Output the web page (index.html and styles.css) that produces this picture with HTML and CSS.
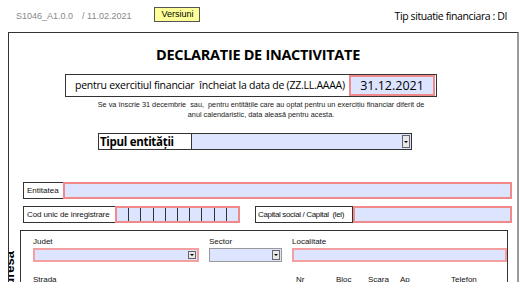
FILE: index.html
```html
<!DOCTYPE html>
<html>
<head>
<meta charset="utf-8">
<link rel="stylesheet" href="styles.css">
</head>
<body>
<div class="top">
  <span class="code">S1046_A1.0.0</span>
  <span class="date">/ 11.02.2021</span>
  <span class="versiuni">Versiuni</span>
  <span class="tip">Tip situatie financiara : DI</span>
</div>
<div class="main">
  <h1 class="title">DECLARATIE DE INACTIVITATE</h1>
  <div class="period">
    <span class="period-label">pentru exercitiul financiar &nbsp;încheiat la data de (ZZ.LL.AAAA)</span>
    <span class="period-val">31.12.2021</span>
  </div>
  <p class="note">Se va înscrie 31 decembrie &nbsp;sau, &nbsp;pentru entitățile care au optat pentru un exercițiu financiar diferit de<br>anul calendaristic, data aleasă pentru acesta.</p>
  <div class="tipul">
    <span class="tipul-label">Tipul entității</span>
    <span class="sel"><span class="arrow"></span></span>
  </div>
  <div class="row ent">
    <span class="lbl">Entitatea</span>
    <span class="inp grow"></span>
  </div>
  <div class="row cui-row">
    <span class="lbl">Cod unic de inregistrare</span>
    <span class="cells">
      <i></i><i></i><i></i><i></i><i></i><i></i><i></i><i></i><i></i><i></i>
    </span>
    <span class="lbl cap">Capital social / Capital &nbsp;(lei)</span>
    <span class="inp grow"></span>
  </div>
  <div class="adresa">
    <div class="vert"><span>Adresa</span></div>
    <div class="addr-box">
      <div class="addr-row">
        <div class="field judet"><span class="flbl">Judet</span><span class="dd pink"><span class="arrow"></span></span></div>
        <div class="field sector"><span class="flbl">Sector</span><span class="dd"><span class="arrow"></span></span></div>
        <div class="field local"><span class="flbl">Localitate</span><span class="dd pink"></span></div>
      </div>
      <div class="addr-row2">
        <span class="s-strada">Strada</span>
        <span class="s-nr">Nr</span>
        <span class="s-bloc">Bloc</span>
        <span class="s-scara">Scara</span>
        <span class="s-ap">Ap</span>
        <span class="s-tel">Telefon</span>
      </div>
    </div>
  </div>
</div>
</body>
</html>
```

FILE: styles.css
```css
html, body {
  margin: 0;
  padding: 0;
  background: #fff;
}
body {
  width: 530px;
  height: 282px;
  overflow: hidden;
  font-family: "Liberation Sans", Arial, sans-serif;
  color: #000;
}
.top {
  height: 32px;
  display: flex;
  align-items: center;
  font-size: 9px;
  box-sizing: border-box;
  padding-top: 0;
}
.code {
  color: #888;
  margin-left: 16px;
}
.date {
  color: #888;
  margin-left: 9px;
}
.versiuni {
  margin-left: 23px;
  margin-top: -4px;
  background: #ffff99;
  border: 1px solid #555;
  padding: 1px 6px 2px;
  font-size: 9px;
}
.tip {
  margin-left: auto;
  margin-right: 23px;
  font-family: "Open Sans", sans-serif;
  font-size: 10.5px;
  letter-spacing: -0.4px;
}
.main {
  margin-left: 8px;
  width: 511px;
  height: 260px;
  border-left: 1px solid #333;
  border-top: 1px solid #333;
  border-right: 2px solid #999;
  box-sizing: border-box;
  display: flex;
  flex-direction: column;
}
.title {
  margin: 12px 0 0 0;
  text-align: center;
  font-size: 14.5px;
  font-weight: bold;
  font-family: "Open Sans", sans-serif;
  letter-spacing: -0.3px;
  line-height: 20px;
  padding-right: 10px;
}
.period {
  margin: 9px 0 0 56px;
  width: 372px;
  height: 23px;
  border: 1px solid #333;
  box-sizing: border-box;
  display: flex;
  align-items: stretch;
  font-family: "Open Sans", sans-serif;
}
.period-label {
  flex: 1;
  font-size: 10.5px;
  line-height: 21px;
  padding-left: 9px;
  letter-spacing: -0.25px;
}
.period-val {
  width: 86px;
  border: 2px solid #f08a8a;
  background: #dde4ff;
  box-sizing: border-box;
  text-align: center;
  font-size: 12.5px;
  line-height: 17px;
  margin: 0 1px 0 0;
}
.note {
  margin: 3px 0 0 0;
  text-align: center;
  font-size: 7.3px;
  line-height: 10px;
  color: #222;
  padding-right: 4px;
}
.tipul {
  margin: 13px 0 0 89px;
  width: 314px;
  height: 17px;
  border: 1px solid #333;
  box-sizing: border-box;
  display: flex;
}
.tipul-label {
  width: 91px;
  border-right: 1px solid #333;
  font-weight: bold;
  font-size: 11.5px;
  line-height: 15px;
  padding-left: 1px;
  font-family: "Open Sans", sans-serif;
  letter-spacing: -0.3px;
}
.sel {
  flex: 1;
  background: #dde4ff;
  position: relative;
}
.arrow {
  position: absolute;
  right: 1px;
  top: 1px;
  bottom: 1px;
  width: 8px;
  background: #e8e8e8;
  border: 1px solid #666;
  box-sizing: border-box;
}
.arrow::after {
  content: "";
  position: absolute;
  left: 1px;
  top: 50%;
  margin-top: -1px;
  border-left: 2px solid transparent;
  border-right: 2px solid transparent;
  border-top: 2px solid #000;
}
.row {
  display: flex;
  margin-left: 14px;
  height: 17px;
}
.ent {
  margin-top: 32px;
  width: 489px;
}
.cui-row {
  margin-top: 7px;
  width: 489px;
}
.lbl {
  border: 1px solid #333;
  border-right: none;
  font-size: 8px;
  line-height: 15px;
  padding: 0 1px 0 3px;
  box-sizing: border-box;
  white-space: nowrap;
  color: #111;
  overflow: hidden;
}
.ent .lbl { width: 40px; }
.cui-row .lbl { width: 92px; letter-spacing: -0.1px; }
.cui-row .cap {
  margin-left: 15px;
  width: 98px;
  border-right: 1px solid #333;
  padding-left: 2px;
  letter-spacing: -0.35px;
}
.inp {
  background: #dde4ff;
  border: 2px solid #f08a8a;
  box-sizing: border-box;
}
.grow { flex: 1; }
.cells {
  width: 125px;
  display: flex;
  border: 2px solid #f08a8a;
  box-sizing: border-box;
  background: #dde4ff;
}
.cells i {
  flex: 1;
  border-left: 1px solid #333;
}
.cells i:first-child { border-left: none; }
.adresa {
  display: flex;
  margin-top: 7px;
  flex: 1;
}
.vert {
  width: 14px;
  position: relative;
  overflow: hidden;
}
.vert span {
  position: absolute;
  left: -7px;
  top: 21px;
  writing-mode: vertical-rl;
  transform: rotate(180deg);
  font-weight: bold;
  font-size: 13px;
  line-height: 16px;
  font-family: "Liberation Sans", sans-serif;
  white-space: nowrap;
}
.addr-box {
  flex: 1;
  margin-right: 9px;
  border-left: 1px solid #333;
  border-top: 1px solid #333;
  border-right: 1px solid #333;
  padding-left: 12px;
}
.addr-row {
  display: flex;
  margin-top: 5px;
}
.field {
  display: flex;
  flex-direction: column;
}
.flbl {
  font-size: 8px;
  line-height: 11px;
  height: 12px;
  color: #111;
}
.dd {
  height: 14px;
  background: #dde4ff;
  border: 1px solid #999;
  box-sizing: border-box;
  position: relative;
}
.dd.pink {
  border: 2px solid #f4a0a0;
}
.judet { width: 166px; }
.sector { width: 73px; margin-left: 10px; }
.local { width: 215px; margin-left: 10px; }
.addr-row2 {
  position: relative;
  margin-top: 13px;
  font-size: 8px;
  height: 12px;
  color: #111;
}
.addr-row2 span {
  position: absolute;
  top: 0;
}
.s-strada { left: 0; }
.s-nr { left: 263px; }
.s-bloc { left: 303px; }
.s-scara { left: 335px; }
.s-ap { left: 367px; }
.s-tel { left: 418px; }
```
